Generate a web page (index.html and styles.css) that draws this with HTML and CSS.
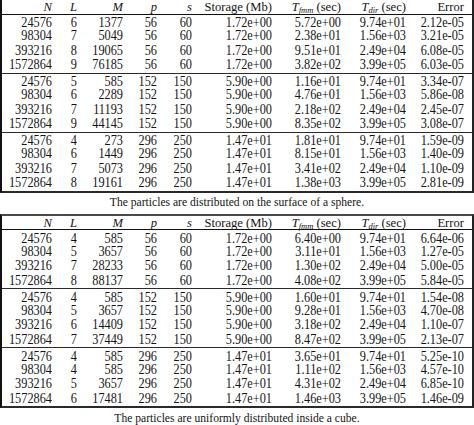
FILE: index.html
```html
<!DOCTYPE html>
<html>
<head>
<meta charset="utf-8">
<link rel="stylesheet" href="styles.css">
</head>
<body>
<div class="page">
  <div class="frame frame-top">
    <table class="data">
      <colgroup>
        <col class="c-n"><col class="c-l"><col class="c-m"><col class="c-p"><col class="c-s">
        <col class="c-st"><col class="c-tf"><col class="c-td"><col class="c-err">
      </colgroup>
      <thead>
        <tr><th><i>N</i></th><th><i>L</i></th><th><i>M</i></th><th><i>p</i></th><th><i>s</i></th><th>Storage (Mb)</th><th><i>T</i><sub>fmm</sub> (sec)</th><th><i>T</i><sub>dir</sub> (sec)</th><th class="last">Error</th></tr>
      </thead>
      <tbody>
        <tr><td>24576</td><td>6</td><td>1377</td><td>56</td><td>60</td><td>1.72e+00</td><td>5.72e+00</td><td>9.74e+01</td><td class="last">2.12e-05</td></tr>
        <tr><td>98304</td><td>7</td><td>5049</td><td>56</td><td>60</td><td>1.72e+00</td><td>2.38e+01</td><td>1.56e+03</td><td class="last">3.21e-05</td></tr>
        <tr><td>393216</td><td>8</td><td>19065</td><td>56</td><td>60</td><td>1.72e+00</td><td>9.51e+01</td><td>2.49e+04</td><td class="last">6.08e-05</td></tr>
        <tr><td>1572864</td><td>9</td><td>76185</td><td>56</td><td>60</td><td>1.72e+00</td><td>3.82e+02</td><td>3.99e+05</td><td class="last">6.03e-05</td></tr>
        <tr class="grp"><td>24576</td><td>5</td><td>585</td><td>152</td><td>150</td><td>5.90e+00</td><td>1.16e+01</td><td>9.74e+01</td><td class="last">3.34e-07</td></tr>
        <tr><td>98304</td><td>6</td><td>2289</td><td>152</td><td>150</td><td>5.90e+00</td><td>4.76e+01</td><td>1.56e+03</td><td class="last">5.86e-08</td></tr>
        <tr><td>393216</td><td>7</td><td>11193</td><td>152</td><td>150</td><td>5.90e+00</td><td>2.18e+02</td><td>2.49e+04</td><td class="last">2.45e-07</td></tr>
        <tr><td>1572864</td><td>9</td><td>44145</td><td>152</td><td>150</td><td>5.90e+00</td><td>8.35e+02</td><td>3.99e+05</td><td class="last">3.08e-07</td></tr>
        <tr class="grp"><td>24576</td><td>4</td><td>273</td><td>296</td><td>250</td><td>1.47e+01</td><td>1.81e+01</td><td>9.74e+01</td><td class="last">1.59e-09</td></tr>
        <tr><td>98304</td><td>6</td><td>1449</td><td>296</td><td>250</td><td>1.47e+01</td><td>8.15e+01</td><td>1.56e+03</td><td class="last">1.40e-09</td></tr>
        <tr><td>393216</td><td>7</td><td>5073</td><td>296</td><td>250</td><td>1.47e+01</td><td>3.41e+02</td><td>2.49e+04</td><td class="last">1.10e-09</td></tr>
        <tr><td>1572864</td><td>8</td><td>19161</td><td>296</td><td>250</td><td>1.47e+01</td><td>1.38e+03</td><td>3.99e+05</td><td class="last">2.81e-09</td></tr>
      </tbody>
    </table>
  </div>
  <p class="caption caption-top"><span>The particles are distributed on the surface of a sphere.</span></p>

  <div class="frame frame-bottom">
    <table class="data">
      <colgroup>
        <col class="c-n"><col class="c-l"><col class="c-m"><col class="c-p"><col class="c-s">
        <col class="c-st"><col class="c-tf"><col class="c-td"><col class="c-err">
      </colgroup>
      <thead>
        <tr><th><i>N</i></th><th><i>L</i></th><th><i>M</i></th><th><i>p</i></th><th><i>s</i></th><th>Storage (Mb)</th><th><i>T</i><sub>fmm</sub> (sec)</th><th><i>T</i><sub>dir</sub> (sec)</th><th class="last">Error</th></tr>
      </thead>
      <tbody>
        <tr><td>24576</td><td>4</td><td>585</td><td>56</td><td>60</td><td>1.72e+00</td><td>6.40e+00</td><td>9.74e+01</td><td class="last">6.64e-06</td></tr>
        <tr><td>98304</td><td>5</td><td>3657</td><td>56</td><td>60</td><td>1.72e+00</td><td>3.11e+01</td><td>1.56e+03</td><td class="last">1.27e-05</td></tr>
        <tr><td>393216</td><td>7</td><td>28233</td><td>56</td><td>60</td><td>1.72e+00</td><td>1.30e+02</td><td>2.49e+04</td><td class="last">5.00e-05</td></tr>
        <tr><td>1572864</td><td>8</td><td>88137</td><td>56</td><td>60</td><td>1.72e+00</td><td>4.08e+02</td><td>3.99e+05</td><td class="last">5.84e-05</td></tr>
        <tr class="grp"><td>24576</td><td>4</td><td>585</td><td>152</td><td>150</td><td>5.90e+00</td><td>1.60e+01</td><td>9.74e+01</td><td class="last">1.54e-08</td></tr>
        <tr><td>98304</td><td>5</td><td>3657</td><td>152</td><td>150</td><td>5.90e+00</td><td>9.28e+01</td><td>1.56e+03</td><td class="last">4.70e-08</td></tr>
        <tr><td>393216</td><td>6</td><td>14409</td><td>152</td><td>150</td><td>5.90e+00</td><td>3.18e+02</td><td>2.49e+04</td><td class="last">1.10e-07</td></tr>
        <tr><td>1572864</td><td>7</td><td>37449</td><td>152</td><td>150</td><td>5.90e+00</td><td>8.47e+02</td><td>3.99e+05</td><td class="last">2.13e-07</td></tr>
        <tr class="grp"><td>24576</td><td>4</td><td>585</td><td>296</td><td>250</td><td>1.47e+01</td><td>3.65e+01</td><td>9.74e+01</td><td class="last">5.25e-10</td></tr>
        <tr><td>98304</td><td>4</td><td>585</td><td>296</td><td>250</td><td>1.47e+01</td><td>1.11e+02</td><td>1.56e+03</td><td class="last">4.57e-10</td></tr>
        <tr><td>393216</td><td>5</td><td>3657</td><td>296</td><td>250</td><td>1.47e+01</td><td>4.31e+02</td><td>2.49e+04</td><td class="last">6.85e-10</td></tr>
        <tr><td>1572864</td><td>6</td><td>17481</td><td>296</td><td>250</td><td>1.47e+01</td><td>1.46e+03</td><td>3.99e+05</td><td class="last">1.46e-09</td></tr>
      </tbody>
    </table>
  </div>
  <p class="caption caption-bottom"><span>The particles are uniformly distributed inside a cube.</span></p>
</div>
</body>
</html>
```

FILE: styles.css
```css
html, body {
  margin: 0;
  padding: 0;
  background: #ffffff;
}

.page {
  width: 474px;
  font-family: "Liberation Serif", "Times New Roman", serif;
  font-size: 12.3px;
  color: #141414;
}

.frame {
  box-sizing: border-box;
  width: 474px;
  border-left: 2px solid #111111;
  border-right: 2px solid #222222;
  border-bottom: 2px solid #2a2a2a;
}

.frame-bottom {
  border-top: 2px solid #4a4a4a;
}

.data {
  width: 470px;
  table-layout: fixed;
  border-collapse: collapse;
  border-spacing: 0;
}

.c-n { width: 50px; }
.c-l { width: 25px; }
.c-m { width: 46px; }
.c-p { width: 34px; }
.c-s { width: 35px; }
.c-st { width: 80px; }
.c-tf { width: 69px; }
.c-td { width: 65px; }
.c-err { width: 66px; }

.data th,
.data td {
  padding: 0;
  text-align: right;
  white-space: nowrap;
  font-weight: normal;
  line-height: 14px;
  height: 14.5px;
}

.data td {
  transform: scaleY(1.12);
}

.data th {
  box-sizing: border-box;
  height: 13.5px;
  padding-top: 1px;
  line-height: 12.5px;
  font-size: 12.6px;
}

.data thead tr {
  border-bottom: 1.5px solid #111111;
}

.data th i {
  font-style: italic;
}

.data sub {
  font-style: italic;
  font-size: 8.5px;
  line-height: 0;
  vertical-align: -2px;
}

.data .last {
  padding-right: 8px;
}

.data tr.grp {
  border-top: 1.5px solid #2a2a2a;
}

.caption {
  margin: 0;
  text-align: center;
  font-size: 11.6px;
  line-height: 20px;
  height: 21px;
}

.caption span {
  display: inline-block;
  transform: scaleY(1.12);
}

.caption-bottom {
  line-height: 22px;
}
```
